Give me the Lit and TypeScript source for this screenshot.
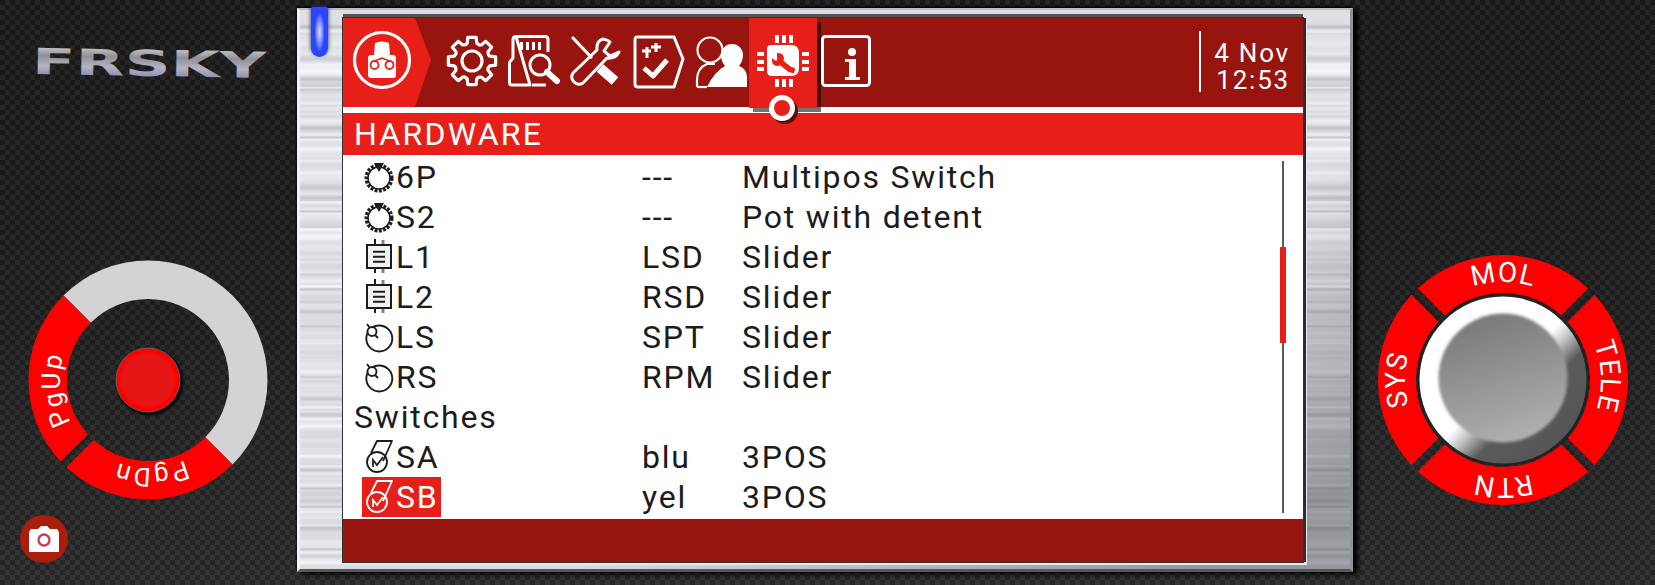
import { LitElement, html, css, svg } from "lit";
import { customElement } from "lit/decorators.js";

const pt = (cx: number, cy: number, r: number, a: number) => {
  const t = ((a - 90) * Math.PI) / 180;
  return `${(cx + r * Math.cos(t)).toFixed(2)} ${(cy + r * Math.sin(t)).toFixed(2)}`;
};

/* annular segment between clock angles a0..a1 with parallel gap edges */
const seg = (c: number, r0: number, r1: number, a0: number, a1: number, g0: number, g1: number) => {
  const d = (g: number, r: number) => (Math.asin(g / 2 / r) * 180) / Math.PI;
  return `M${pt(c, c, r1, a0 + d(g0, r1))} A${r1} ${r1} 0 0 1 ${pt(c, c, r1, a1 - d(g1, r1))} L${pt(c, c, r0, a1 - d(g1, r0))} A${r0} ${r0} 0 0 0 ${pt(c, c, r0, a0 + d(g0, r0))} Z`;
};
const arc = (c: number, r: number, a0: number, a1: number) =>
  `M${pt(c, c, r, a0)} A${r} ${r} 0 0 1 ${pt(c, c, r, a1)}`;

/* brushed-metal streaks, computed from a seeded generator */
const brushed = (() => {
  let s = 1337;
  const rnd = () => {
    s = (s * 1664525 + 1013904223) >>> 0;
    return s / 4294967296;
  };
  const stops: string[] = [];
  let y = 0;
  while (y < 564) {
    const k = rnd();
    let g = 214 + rnd() * 18;
    if (k > 0.86) g = 236 + rnd() * 10;
    else if (k < 0.14) g = 188 + rnd() * 20;
    const v = Math.round(g);
    stops.push(`rgb(${v},${v + 1},${v + 4}) ${y}px`);
    y += 1 + Math.floor(rnd() * 4);
  }
  return `linear-gradient(to bottom right, rgba(50,55,62,0) 0 62%, rgba(50,55,62,.42) 92%), linear-gradient(180deg, ${stops.join(",")})`;
})();

const potIcon = svg`<svg class="ri" viewBox="0 0 32 32"><circle cx="17" cy="17" r="12.500" fill="none" stroke="currentColor" stroke-width="4" stroke-dasharray="2.800 1.400"/><circle cx="17" cy="17" r="11" fill="none" stroke="currentColor" stroke-width="1.400"/><path d="M12 2h10L17 11z" fill="currentColor"/></svg>`;
const sliderIcon = svg`<svg class="ri" viewBox="0 0 32 32" fill="none" stroke="currentColor"><rect x="5" y="4" width="24" height="23" stroke-width="2" fill="#f2f2f2"/><path d="M11 10.700h12M11 15.700h12M11 20.700h12" stroke-width="2"/><path d="M13 -2v6M13 27v5" stroke-width="2"/><path d="M21 -1v5M21 27v5" stroke-width="3" stroke-opacity=".55"/></svg>`;
const trimIcon = svg`<svg class="ri" viewBox="0 0 32 32" fill="none" stroke="currentColor" stroke-width="1.900"><circle cx="17.300" cy="17.500" r="13"/><circle cx="10" cy="10.500" r="4.500" fill="var(--rowbg)"/><path d="M5 3l3 4M13 14l3 3"/></svg>`;
const switchIcon = svg`<svg class="ri" viewBox="0 0 32 32" fill="none" stroke="currentColor" stroke-width="1.800"><circle cx="15" cy="21" r="10"/><path d="M9 12 15 0H30L21 20" stroke-linejoin="round"/><path d="M11 26V19L15 24 21 16" stroke-width="1.700"/></svg>`;

type Row = { kind?: string; name: string; col2?: string; col3?: string; sel?: boolean };
const rows: Row[] = [
  { kind: "pot", name: "6P", col2: "---", col3: "Multipos Switch" },
  { kind: "pot", name: "S2", col2: "---", col3: "Pot with detent" },
  { kind: "slider", name: "L1", col2: "LSD", col3: "Slider" },
  { kind: "slider", name: "L2", col2: "RSD", col3: "Slider" },
  { kind: "trim", name: "LS", col2: "SPT", col3: "Slider" },
  { kind: "trim", name: "RS", col2: "RPM", col3: "Slider" },
  { name: "Switches" },
  { kind: "switch", name: "SA", col2: "blu", col3: "3POS" },
  { kind: "switch", name: "SB", col2: "yel", col3: "3POS", sel: true },
];
const icons: Record<string, unknown> = { pot: potIcon, slider: sliderIcon, trim: trimIcon, switch: switchIcon };

const gearPath = (() => {
  const n = 8;
  const cx = 26, cy = 26, ro = 24, ri = 17.500;
  let d = "";
  for (let i = 0; i < n; i++) {
    const a = (i * 360) / n;
    const w = 10;
    const pts = [pt(cx, cy, ri, a - 22.5 + 2), pt(cx, cy, ri + 1, a - 15), pt(cx, cy, ro, a - w), pt(cx, cy, ro, a + w), pt(cx, cy, ri + 1, a + 15)];
    d += (i === 0 ? "M" : "L") + pts.join(" L");
  }
  return d + "Z";
})();

@customElement("app-root")
export class AppRoot extends LitElement {
  static styles = css`
    :host {
      display: block;
      width: 1655px;
      height: 585px;
      overflow: hidden;
      font-family: Roboto, "Liberation Sans", sans-serif;
      background-color: #232323;
      background-image:
        linear-gradient(180deg, rgba(0,0,0,.2) 0, rgba(0,0,0,.16) 40%, rgba(255,255,255,.03) 100%),
        repeating-conic-gradient(#2e2e2e 0 25%, #1f1f1f 0 50%);
      background-size: 100% 100%, 10px 10px;
    }
    .device { display: flex; width: 1655px; height: 585px; }
    .left { width: 297px; flex: none; display: flex; flex-direction: column; }
    .logo { display: block; margin: 44px 0 0 30px; width: 240px; height: 40px; overflow: visible; }
    .ldial { display: block; margin: 172px 0 0 24px; width: 248px; height: 248px; }
    .cam { display: flex; align-items: center; justify-content: center; width: 48px; height: 48px; margin: 11px 0 0 20px; border-radius: 50%; background: #a91d0a; }
    .bezel {
      position: relative;
      flex: none;
      box-sizing: border-box;
      width: 1056px;
      height: 564px;
      margin-top: 8px;
      padding: 8px 49px 5px 43px;
      border-style: solid;
      border-width: 2px 3px 3px 3px;
      border-color: #b8bcc4 #8f9196 #55575a #f2f2f4;
      box-shadow: 5px 2px 5px #000, 0 -1px 3px #000;
      background-color: #d9dbe0;
    }
    .frame { box-shadow: 0 0 0 1px #333, 0 -4px 0 0 #555, 3px 0 0 0 #2c2c2c, 4px 3px 0 0 #e9e9ec, 0 3px 0 0 #e9e9ec; }
    .led {
      position: absolute;
      left: 11px;
      top: -3px;
      width: 17px;
      height: 50px;
      border-radius: 2px 2px 9px 9px;
      background: radial-gradient(ellipse 5px 20px at 50% 50%, #d6dcff 0, #8c9cff 50%, #2b45ff 100%);
      box-shadow: 0 -2px 4px #2a2a55;
    }
    .screen { display: flex; flex-direction: column; width: 960px; height: 544px; background: #fff; color: #1c1c1c; }
    .head { display: flex; align-items: stretch; height: 89px; background: #98140f; position: relative; }
    .home { width: 88px; height: 89px; flex: none; display: block; }
    .tabs { display: flex; align-items: center; }
    .tab { display: block; color: #fff; flex: none; }
    .t1 { width: 52px; height: 52px; margin: -3px 0 0 15px; }
    .t2 { width: 52px; height: 52px; margin: -3px 0 0 10px; }
    .t3 { width: 52px; height: 52px; margin: -3px 0 0 9px; }
    .t4 { width: 52px; height: 54px; margin: -2px 0 0 12px; }
    .t5 { width: 54px; height: 54px; margin: -2px 0 0 10px; }
    .active { position: relative; width: 68px; height: 90px; flex: none; align-self: flex-start; background: #e62019; box-shadow: 4px 4px 0 rgba(0,0,0,.55); display: flex; align-items: flex-start; justify-content: center; }
    .active svg { margin-top: 17px; }
    .dot { position: absolute; left: 20px; top: 77px; width: 16px; height: 16px; border: 5px solid #fff; border-radius: 50%; background: #e62019; box-shadow: 3px 3px 0 #5a0d0a; }
    .t6 { width: 50px; height: 52px; margin: -3px 0 0 4px; }
    .date { margin: 13px 13px 0 auto; height: 61px; width: 91px; box-sizing: border-box; border-left: 2px solid #fff; color: #fff; font-size: 26px; letter-spacing: 1.800px; line-height: 27px; text-align: right; padding-top: 9px; white-space: nowrap; }
    .sep { height: 6px; background: #fff; flex: none; }
    .title { height: 42px; box-sizing: border-box; padding: 3px 0 0 11px; background: #e62019; color: #fff; font-size: 32px; line-height: 36px; letter-spacing: 2.250px; flex: none; }
    .list { position: relative; flex: none; height: 364px; padding-top: 2px; box-sizing: border-box; }
    .row { --rowbg: #fff; display: grid; grid-template-columns: 280px 100px 1fr; height: 40px; padding-left: 19px; font-size: 32px; line-height: 40px; letter-spacing: 1.800px; align-items: center; }
    .name { display: flex; align-items: center; height: 40px; justify-self: start; padding-right: 2px; }
    .name.sel { --rowbg: #e62019; background: #e62019; color: #fff; }
    .ri { width: 32px; height: 32px; margin-right: 2px; flex: none; overflow: visible; }
    .section { height: 40px; padding-left: 11px; font-size: 32px; line-height: 40px; letter-spacing: 1.800px; }
    .bar { position: absolute; left: 939px; top: 6px; width: 2px; height: 352px; background: #5a5a5a; }
    .thumb { position: absolute; left: -2px; top: 86px; width: 6px; height: 96px; background: #e62019; }
    .foot { flex: 1; background: #98140f; }
    .right { flex: 1; display: flex; align-items: flex-start; }
    .rdial { display: block; margin: 250px 0 0 20px; width: 260px; height: 260px; flex: none; }
    .dtext { font-family: Roboto, "Liberation Sans", sans-serif; fill: #fff; }
  `;

  render() {
    return html`
      <div class="device">
        <div class="left">
          ${this.logo()} ${this.leftDial()}
          <div class="cam">
            <svg width="32" height="28" viewBox="0 0 32 28"><path d="M3 4h7l3-3h6l3 3h7l2 3v20H1V7z" fill="#fff"/><circle cx="16" cy="15" r="5.500" fill="none" stroke="#c9405a" stroke-width="2.400"/></svg>
          </div>
        </div>
        <div class="bezel" style="background-image:${brushed}">
          <div class="led"></div>
          <div class="frame screen">
            <div class="head">
              ${this.home()}
              <div class="tabs">
                ${this.gear()} ${this.sd()} ${this.tools()} ${this.check()} ${this.users()}
                <div class="active">${this.chip()}<div class="dot"></div></div>
                ${this.info()}
              </div>
              <div class="date">4 Nov<br />12:53</div>
            </div>
            <div class="sep"></div>
            <div class="title">HARDWARE</div>
            <div class="list">
              ${rows.map((r) =>
                r.kind
                  ? html`<div class="row">
                      <div class="name ${r.sel ? "sel" : ""}">${icons[r.kind]}${r.name}</div>
                      <div>${r.col2}</div>
                      <div>${r.col3}</div>
                    </div>`
                  : html`<div class="section">${r.name}</div>`
              )}
              <div class="bar"><div class="thumb"></div></div>
            </div>
            <div class="foot"></div>
          </div>
        </div>
        <div class="right">${this.rightDial()}</div>
      </div>
    `;
  }

  logo() {
    return html`<svg class="logo" viewBox="0 0 240 40">
      <defs>
        <linearGradient id="lg" x1="0" x2="0" y1="0" y2="1">
          <stop offset="0" stop-color="#e6e6e8" />
          <stop offset=".35" stop-color="#8f8f96" />
          <stop offset=".6" stop-color="#b4b4c2" />
          <stop offset="1" stop-color="#6f70a8" />
        </linearGradient>
      </defs>
      <text x="2" y="32" transform="rotate(1 120 20)" textLength="234" lengthAdjust="spacingAndGlyphs" font-family="'DejaVu Sans', sans-serif" font-weight="700" font-size="36" fill="url(#lg)">FRSKY</text>
    </svg>`;
  }

  leftDial() {
    const c = 124;
    return html`<svg class="ldial" viewBox="0 0 248 248">
      <defs>
        <path id="pgup" d="${arc(c, 88, 204, 324)}" />
        <path id="pgdn" d="${arc(c, 88, 118, 238)}" />
        <filter id="bs" x="-30%" y="-30%" width="160%" height="160%"><feGaussianBlur stdDeviation="1.500" /></filter>
      </defs>
      <path d="${seg(c, 81, 119.500, -45, 135, 0, 0)}" fill="#d3d3d3" />
      <path d="${seg(c, 81, 119.500, 225, 315, 8, 0)}" fill="#ff0000" />
      <path d="${seg(c, 81, 119.500, 135, 225, 0, 8)}" fill="#ff0000" />
      <text class="dtext" font-size="26" letter-spacing="2" text-anchor="middle"><textPath href="#pgup" startOffset="50%">PgUp</textPath></text>
      <text class="dtext" font-size="26" letter-spacing="2" text-anchor="middle"><textPath href="#pgdn" startOffset="50%">PgDn</textPath></text>
      <circle cx="${c + 2}" cy="${c + 2}" r="33" fill="#000" filter="url(#bs)" />
      <circle cx="${c}" cy="${c}" r="32" fill="#ff0000" stroke="#6e5a5a" stroke-width="1" />
      <circle cx="${c}" cy="${c}" r="27" fill="#e51414" filter="url(#bs)" />
    </svg>`;
  }

  rightDial() {
    const c = 130;
    const R = 125, r = 87, g = 9;
    const labels: [string, number, number, number][] = [
      ["MOL", 315, 45, 98],
      ["TELE", 43, 133, 98],
      ["RTN", 135, 225, 98],
      ["SYS", 225, 315, 98],
    ];
    return html`<svg class="rdial" viewBox="0 0 260 260">
      <defs>
        <linearGradient id="kn" x1=".12" y1=".12" x2=".88" y2=".88">
          <stop offset="0" stop-color="#fff" />
          <stop offset=".5" stop-color="#fff" />
          <stop offset=".58" stop-color="#c4c4c4" />
          <stop offset=".7" stop-color="#5a5a5a" />
          <stop offset="1" stop-color="#555" />
        </linearGradient>
        <linearGradient id="kd" x1=".3" y1="0" x2=".6" y2="1">
          <stop offset="0" stop-color="#787878" />
          <stop offset="1" stop-color="#b0b0b0" />
        </linearGradient>
        <filter id="kb" x="-10%" y="-10%" width="120%" height="120%"><feGaussianBlur stdDeviation="1.600" /></filter>
        ${labels.map(([, a0, a1, tr], i) => svg`<path id="rl${i}" d="${arc(c, tr, a0, a1)}" />`)}
      </defs>
      ${[[315, 45], [45, 135], [135, 225], [225, 315]].map(([a0, a1]) => svg`<path d="${seg(c, r, R, a0, a1, g, g)}" fill="#ff0000" />`)}
      ${labels.map(
        ([t], i) => svg`<text class="dtext" font-size="28" letter-spacing="1" text-anchor="middle"><textPath href="#rl${i}" startOffset="50%">${t}</textPath></text>`
      )}
      <circle cx="${c}" cy="${c}" r="86" fill="#222" />
      <circle cx="${c}" cy="${c}" r="83.500" fill="url(#kn)" />
      <circle cx="${c}" cy="${c - 2}" r="64.500" fill="url(#kd)" filter="url(#kb)" />
    </svg>`;
  }

  home() {
    return html`<svg class="home" viewBox="0 0 88 89">
      <path d="M0 0H72L88 42 72 89H0Z" fill="#e62019" />
      <circle cx="39" cy="42" r="27.500" fill="none" stroke="#fff" stroke-width="3.200" />
      <path d="M32 25q7-3 14 0l1 12h3q3 0 3 3v17q0 3-3 3H28q-3 0-3-3V40q0-3 3-3h3z" fill="#fff" />
      <circle cx="31.500" cy="47" r="4" fill="#fff" stroke="#e62019" stroke-width="1.800" />
      <circle cx="46.500" cy="47" r="4" fill="#fff" stroke="#e62019" stroke-width="1.800" />
      <path d="M31.500 43l7.500-3 7.500 3" fill="none" stroke="#e62019" stroke-width="1.400" />
    </svg>`;
  }

  gear() {
    return html`<svg class="tab t1" viewBox="0 0 52 52" fill="none" stroke="#fff" stroke-width="3.200" stroke-linejoin="round">
      <path d="${gearPath}" />
      <circle cx="26" cy="26" r="10" />
    </svg>`;
  }

  sd() {
    return html`<svg class="tab t2" viewBox="0 0 52 52" fill="none" stroke="#fff" stroke-width="3" stroke-linejoin="round">
      <path d="M8 1.500H37q3 0 3 3V17M22 50H4q-2.500 0-2.500-2.500V28q0-1 1-2L5 23V4.500Q5 1.500 8 1.500ZM24 50h14" />
      <path d="M12 7h3v8h-3zM18 7h3v8h-3zM24 7h3v8h-3zM30 7h3v8h-3z" fill="#fff" stroke="none" />
      <circle cx="32" cy="30" r="10" />
      <path d="M39 37 49 46" stroke-width="6" stroke-linecap="round" />
    </svg>`;
  }

  tools() {
    return html`<svg class="tab t3" viewBox="0 0 52 52" fill="none" stroke="#fff" stroke-linejoin="round">
      <path d="M4 3 22 22" stroke-width="3.200" stroke-linecap="round" />
      <path d="M31 33 46 46" stroke-width="10" />
      <path d="M34 4q-7 2-6 11L4 38q-3 5 1 9t9 1l24-25q9 1 12-6l-9 4-6-5 6-9q-2-2-7-3z" stroke-width="3" />
    </svg>`;
  }

  check() {
    return html`<svg class="tab t4" viewBox="0 0 52 54" fill="none" stroke="#fff" stroke-width="3" stroke-linejoin="round">
      <path d="M4 2H41L50 24 41 52H5Q2 52 2 49V5Q2 2 4 2Z" />
      <path d="M9 16h9M14 12v11M18 12h10M23 8v9" stroke-width="3" />
      <path d="M11 33l9 8 14-16" stroke-width="5" />
    </svg>`;
  }

  users() {
    return html`<svg class="tab t5" viewBox="0 0 54 54" fill="none" stroke="#fff" stroke-width="2.200">
      <circle cx="15" cy="15" r="12.500" />
      <path d="M2 52V45Q2 33 12 29H20" />
      <path d="M12 52H52V42Q52 34 44 31 48 26 48 20A11 11 0 0 0 26 20Q26 26 30 31 20 36 12 52Z" fill="#fff" stroke="none" />
      <path d="M2 52H12" />
    </svg>`;
  }

  chip() {
    return html`<svg class="tab" width="54" height="54" viewBox="0 0 54 54" fill="#fff">
      <path d="M11 14q0-4 4-4H35q8 0 8 8V33q0 8-8 8H16q-5 0-5-5Z" />
      <path d="M19 0h4v8h-4zM26 0h4v8h-4zM33 0h4v8h-4zM19 44h4v8h-4zM26 44h4v8h-4zM33 44h4v8h-4zM1 17h7v4H1zM1 25h7v4H1zM1 32h7v4H1zM46 17h7v4h-7zM46 25h7v4h-7zM46 32h7v4h-7z" />
      <path d="M22 19q5 0 5 5l-1 2 9 7q5 0 2 4l-4-1-9-7-2 1q-5 0-5-5l3 2q3-1 2-4z" fill="#e62019" stroke="#e62019" stroke-width="2" />
    </svg>`;
  }

  info() {
    return html`<svg class="tab t6" viewBox="0 0 50 52" fill="none" stroke="#fff" stroke-width="3" stroke-linejoin="round">
      <rect x="1.500" y="1.500" width="47" height="49" rx="3" />
      <circle cx="31" cy="17" r="4" fill="#fff" stroke="none" />
      <path d="M24 24H35V42H39V45H24V42H28V27H24Z" fill="#fff" stroke="none" />
    </svg>`;
  }
}
